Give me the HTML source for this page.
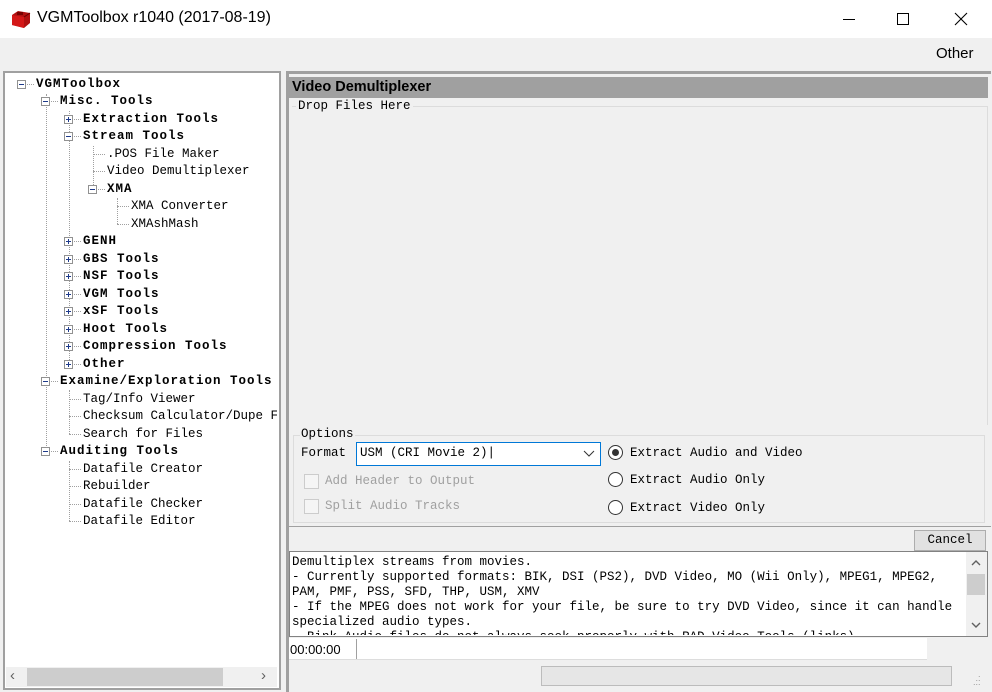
<!DOCTYPE html>
<html><head><meta charset="utf-8"><style>
*{box-sizing:border-box;margin:0;padding:0}
body{width:992px;height:692px;position:relative;background:#f0f0f0;overflow:hidden;font-family:"Liberation Mono","Noto Sans CJK SC",monospace;font-size:12.5px;color:#000}
.a{position:absolute;white-space:nowrap}
.t{line-height:15px}
.b{font-weight:bold;letter-spacing:1px}
.bx{position:absolute;width:9px;height:9px;border:1px solid #919191;background:#fff}
.bx::before{content:"";position:absolute;left:1px;top:3px;width:5px;height:1px;background:#1e3a8a}
.bx.p::after{content:"";position:absolute;left:3px;top:1px;width:1px;height:5px;background:#1e3a8a}
.vl{position:absolute;border-left:1px dotted #a0a0a0;width:0}
.hl{position:absolute;border-top:1px dotted #a0a0a0;height:0}
.sans{font-family:"Liberation Sans",sans-serif}
</style></head><body>
<div class="a" style="left:0;top:0;width:992px;height:38px;background:#fff"></div>
<svg class="a" style="left:10px;top:9px" width="22" height="20" viewBox="0 0 22 20"><path d="M2 6 L8 2 L20 4 L20 14 L14 19 L2 16Z" fill="#b01010"/><path d="M2 6 L14 8 L14 19 L2 16Z" fill="#d41818"/><path d="M14 8 L20 4" stroke="#600" fill="none"/><rect x="7" y="3" width="6" height="3" fill="#700"/></svg>
<div class="a sans" style="left:37px;top:9px;font-size:16px">VGMToolbox r1040 (2017-08-19)</div>
<div class="a" style="left:843px;top:19px;width:12px;height:1px;background:#000"></div>
<div class="a" style="left:897px;top:13px;width:12px;height:12px;border:1px solid #000"></div>
<svg class="a" style="left:954px;top:12px" width="14" height="14"><path d="M1 1L13 13M13 1L1 13" stroke="#000" stroke-width="1.1"/></svg>
<div class="a sans" style="left:936px;top:45px;font-size:15px">Other</div>
<div class="a" style="left:3px;top:71px;width:278px;height:619px;border:2px solid #a0a0a0;background:#fff"></div>
<div class="a" style="left:6px;top:667px;width:271px;height:20px;background:#f0f0f0"></div>
<div class="a" style="left:27px;top:668px;width:196px;height:18px;background:#cdcdcd"></div>
<div class="a sans" style="left:10px;top:667px;font-size:15px;color:#606060">&lsaquo;</div>
<div class="a sans" style="left:261px;top:667px;font-size:15px;color:#606060">&rsaquo;</div>
<div class="vl" style="left:46px;top:94px;height:358px"></div>
<div class="vl" style="left:69px;top:111px;height:253px"></div>
<div class="vl" style="left:93px;top:146px;height:43px"></div>
<div class="vl" style="left:117px;top:198px;height:26px"></div>
<div class="vl" style="left:69px;top:390px;height:44px"></div>
<div class="vl" style="left:69px;top:461px;height:60px"></div>
<div class="a" style="left:286px;top:71px;width:705px;height:621px;border-left:3px solid #a0a0a0;border-top:3px solid #a0a0a0"></div>
<div class="a sans" style="left:289px;top:77px;width:699px;height:21px;background:#a0a0a0;font-weight:bold;font-size:14.5px;padding:2px 0 0 3px">Video Demultiplexer</div>
<div class="a" style="left:292px;top:106px;width:696px;height:319px;border-top:1px solid #dcdcdc;border-right:1px solid #dcdcdc"></div>
<div class="a t" style="left:296px;top:99px;background:#f0f0f0;padding:0 2px">Drop Files Here</div>
<div class="a" style="left:293px;top:435px;width:692px;height:88px;border:1px solid #dcdcdc"></div>
<div class="a t" style="left:300px;top:427px;background:#f0f0f0;padding:0 1px">Options</div>
<div class="a t" style="left:301px;top:446px">Format</div>
<div class="a" style="left:356px;top:442px;width:245px;height:24px;border:1px solid #0078d7;background:#fff"></div>
<div class="a t" style="left:360px;top:446px">USM (CRI Movie 2)|</div>
<svg class="a" style="left:583px;top:450px" width="12" height="8"><path d="M1 1L6 6L11 1" stroke="#333" fill="none"/></svg>
<div class="a" style="left:304px;top:474px;width:15px;height:15px;border:1px solid #ccc;background:#f5f5f5"></div>
<div class="a t" style="left:325px;top:474px;color:#a0a0a0">Add Header to Output</div>
<div class="a" style="left:304px;top:499px;width:15px;height:15px;border:1px solid #ccc;background:#f5f5f5"></div>
<div class="a t" style="left:325px;top:499px;color:#a0a0a0">Split Audio Tracks</div>
<div class="a" style="left:608px;top:445px;width:15px;height:15px;border:1px solid #333;border-radius:50%;background:#fff"></div>
<div class="a" style="left:612px;top:449px;width:7px;height:7px;border-radius:50%;background:#333"></div>
<div class="a t" style="left:630px;top:446px">Extract Audio and Video</div>
<div class="a" style="left:608px;top:472px;width:15px;height:15px;border:1px solid #333;border-radius:50%;background:#fff"></div>
<div class="a t" style="left:630px;top:473px">Extract Audio Only</div>
<div class="a" style="left:608px;top:500px;width:15px;height:15px;border:1px solid #333;border-radius:50%;background:#fff"></div>
<div class="a t" style="left:630px;top:501px">Extract Video Only</div>
<div class="a" style="left:289px;top:526px;width:702px;height:1px;background:#a0a0a0"></div>
<div class="a t" style="left:914px;top:530px;width:72px;height:21px;border:1px solid #adadad;background:#e1e1e1;text-align:center;padding-top:2px">Cancel</div>
<div class="a" style="left:289px;top:551px;width:699px;height:86px;background:#fff;border:1px solid #828282"></div>
<div class="a t" style="left:292px;top:555px;width:672px;height:80px;overflow:hidden;white-space:normal">Demultiplex streams from movies.<br>- Currently supported formats: BIK, DSI (PS2), DVD Video, MO (Wii Only), MPEG1, MPEG2, PAM, PMF, PSS, SFD, THP, USM, XMV<br>- If the MPEG does not work for your file, be sure to try DVD Video, since it can handle specialized audio types.<br>- Bink Audio files do not always seek properly with RAD Video Tools (links).</div>
<div class="a" style="left:966px;top:552px;width:21px;height:84px;background:#f0f0f0"></div>
<div class="a" style="left:967px;top:574px;width:18px;height:21px;background:#cdcdcd"></div>
<svg class="a" style="left:970px;top:557px" width="12" height="74"><path d="M2 8L6 4L10 8M2 66L6 70L10 66" stroke="#606060" fill="none" stroke-width="1.4"/></svg>
<div class="a" style="left:289px;top:638px;width:638px;height:22px;background:#fff;border-bottom:1px solid #ddd"></div>
<div class="a sans" style="left:290px;top:642px;font-size:13px">00:00:00</div>
<div class="a" style="left:356px;top:639px;width:1px;height:20px;background:#a0a0a0"></div>
<div class="a" style="left:541px;top:666px;width:411px;height:20px;border:1px solid #bcbcbc;background:#e6e6e6"></div>
<div class="a" style="left:973px;top:672px;color:#999;font:9px/4px sans-serif">&nbsp;&nbsp;.<br>&nbsp;..<br>...</div>
<div class="bx" style="left:17px;top:80px"></div><div class="hl" style="left:27px;top:84px;width:7px"></div><div class="a t b" style="left:36px;top:77px">VGMToolbox</div>
<div class="bx" style="left:41px;top:97px"></div><div class="hl" style="left:51px;top:101px;width:7px"></div><div class="a t b" style="left:60px;top:94px">Misc. Tools</div>
<div class="bx p" style="left:64px;top:115px"></div><div class="hl" style="left:74px;top:119px;width:7px"></div><div class="a t b" style="left:83px;top:112px">Extraction Tools</div>
<div class="bx" style="left:64px;top:132px"></div><div class="hl" style="left:74px;top:136px;width:7px"></div><div class="a t b" style="left:83px;top:129px">Stream Tools</div>
<div class="hl" style="left:93px;top:154px;width:12px"></div><div class="a t" style="left:107px;top:147px">.POS File Maker</div>
<div class="hl" style="left:93px;top:171px;width:12px"></div><div class="a t" style="left:107px;top:164px">Video Demultiplexer</div>
<div class="bx" style="left:88px;top:185px"></div><div class="hl" style="left:98px;top:189px;width:7px"></div><div class="a t b" style="left:107px;top:182px">XMA</div>
<div class="hl" style="left:117px;top:206px;width:12px"></div><div class="a t" style="left:131px;top:199px">XMA Converter</div>
<div class="hl" style="left:117px;top:224px;width:12px"></div><div class="a t" style="left:131px;top:217px">XMAshMash</div>
<div class="bx p" style="left:64px;top:237px"></div><div class="hl" style="left:74px;top:241px;width:7px"></div><div class="a t b" style="left:83px;top:234px">GENH</div>
<div class="bx p" style="left:64px;top:255px"></div><div class="hl" style="left:74px;top:259px;width:7px"></div><div class="a t b" style="left:83px;top:252px">GBS Tools</div>
<div class="bx p" style="left:64px;top:272px"></div><div class="hl" style="left:74px;top:276px;width:7px"></div><div class="a t b" style="left:83px;top:269px">NSF Tools</div>
<div class="bx p" style="left:64px;top:290px"></div><div class="hl" style="left:74px;top:294px;width:7px"></div><div class="a t b" style="left:83px;top:287px">VGM Tools</div>
<div class="bx p" style="left:64px;top:307px"></div><div class="hl" style="left:74px;top:311px;width:7px"></div><div class="a t b" style="left:83px;top:304px">xSF Tools</div>
<div class="bx p" style="left:64px;top:325px"></div><div class="hl" style="left:74px;top:329px;width:7px"></div><div class="a t b" style="left:83px;top:322px">Hoot Tools</div>
<div class="bx p" style="left:64px;top:342px"></div><div class="hl" style="left:74px;top:346px;width:7px"></div><div class="a t b" style="left:83px;top:339px">Compression Tools</div>
<div class="bx p" style="left:64px;top:360px"></div><div class="hl" style="left:74px;top:364px;width:7px"></div><div class="a t b" style="left:83px;top:357px">Other</div>
<div class="bx" style="left:41px;top:377px"></div><div class="hl" style="left:51px;top:381px;width:7px"></div><div class="a t b" style="left:60px;top:374px;width:217px;overflow:hidden">Examine/Exploration Tools</div>
<div class="hl" style="left:69px;top:399px;width:12px"></div><div class="a t" style="left:83px;top:392px">Tag/Info Viewer</div>
<div class="hl" style="left:69px;top:416px;width:12px"></div><div class="a t" style="left:83px;top:409px;width:194px;overflow:hidden">Checksum Calculator/Dupe Finder</div>
<div class="hl" style="left:69px;top:434px;width:12px"></div><div class="a t" style="left:83px;top:427px">Search for Files</div>
<div class="bx" style="left:41px;top:447px"></div><div class="hl" style="left:51px;top:451px;width:7px"></div><div class="a t b" style="left:60px;top:444px">Auditing Tools</div>
<div class="hl" style="left:69px;top:469px;width:12px"></div><div class="a t" style="left:83px;top:462px">Datafile Creator</div>
<div class="hl" style="left:69px;top:486px;width:12px"></div><div class="a t" style="left:83px;top:479px">Rebuilder</div>
<div class="hl" style="left:69px;top:504px;width:12px"></div><div class="a t" style="left:83px;top:497px">Datafile Checker</div>
<div class="hl" style="left:69px;top:521px;width:12px"></div><div class="a t" style="left:83px;top:514px">Datafile Editor</div>
</body></html>
